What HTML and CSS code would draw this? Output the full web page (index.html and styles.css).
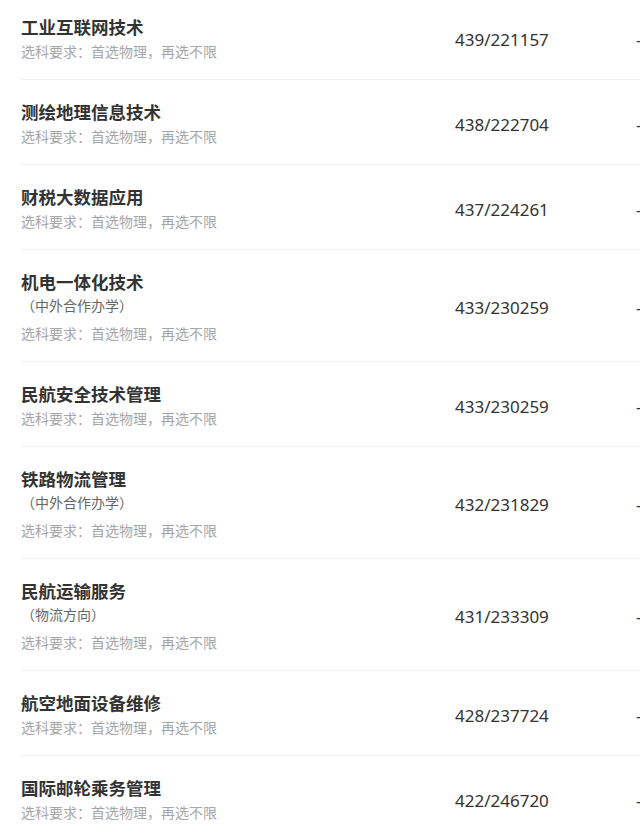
FILE: index.html
```html
<!DOCTYPE html>
<html lang="zh-CN">

<head>
    <meta charset="UTF-8">
    <meta name="viewport" content="width=device-width, initial-scale=1.0">
    <title>专业录取分数</title>
    <link rel="stylesheet" href="styles.css">
</head>

<body>
    <div class="list">
        <div class="row">
            <div class="major">
                <div class="name">工业互联网技术</div>
                <div class="req">选科要求：首选物理，再选不限</div>
            </div>
            <div class="score">439/221157</div>
            <div class="extra">-</div>
        </div>
        <div class="row">
            <div class="major">
                <div class="name">测绘地理信息技术</div>
                <div class="req">选科要求：首选物理，再选不限</div>
            </div>
            <div class="score">438/222704</div>
            <div class="extra">-</div>
        </div>
        <div class="row">
            <div class="major">
                <div class="name">财税大数据应用</div>
                <div class="req">选科要求：首选物理，再选不限</div>
            </div>
            <div class="score">437/224261</div>
            <div class="extra">-</div>
        </div>
        <div class="row">
            <div class="major">
                <div class="name">机电一体化技术</div>
                <div class="note">（中外合作办学）</div>
                <div class="req">选科要求：首选物理，再选不限</div>
            </div>
            <div class="score">433/230259</div>
            <div class="extra">-</div>
        </div>
        <div class="row">
            <div class="major">
                <div class="name">民航安全技术管理</div>
                <div class="req">选科要求：首选物理，再选不限</div>
            </div>
            <div class="score">433/230259</div>
            <div class="extra">-</div>
        </div>
        <div class="row">
            <div class="major">
                <div class="name">铁路物流管理</div>
                <div class="note">（中外合作办学）</div>
                <div class="req">选科要求：首选物理，再选不限</div>
            </div>
            <div class="score">432/231829</div>
            <div class="extra">-</div>
        </div>
        <div class="row">
            <div class="major">
                <div class="name">民航运输服务</div>
                <div class="note">（物流方向）</div>
                <div class="req">选科要求：首选物理，再选不限</div>
            </div>
            <div class="score">431/233309</div>
            <div class="extra">-</div>
        </div>
        <div class="row">
            <div class="major">
                <div class="name">航空地面设备维修</div>
                <div class="req">选科要求：首选物理，再选不限</div>
            </div>
            <div class="score">428/237724</div>
            <div class="extra">-</div>
        </div>
        <div class="row">
            <div class="major">
                <div class="name">国际邮轮乘务管理</div>
                <div class="req">选科要求：首选物理，再选不限</div>
            </div>
            <div class="score">422/246720</div>
            <div class="extra">-</div>
        </div>
    </div>
</body>

</html>
```

FILE: styles.css
```css
body {
    margin: 0;
    padding: 0;
    background-color: #fff;
    font-family: "Noto Sans CJK SC", "Noto Sans", sans-serif;
    color: #333;
    overflow: hidden;
}

.list {
    margin-top: -5px;
    margin-left: 21px;
}

.row {
    display: grid;
    grid-template-columns: 434px 181px 1fr;
    align-items: center;
    padding: 20px 0 16px;
    border-bottom: 1px solid #f2f2f2;
}

.name {
    font-size: 17.5px;
    font-weight: bold;
    line-height: 24px;
    color: #333;
}

.note {
    font-size: 14px;
    line-height: 22px;
    color: #666;
    margin-bottom: 5px;
}

.req {
    font-size: 14px;
    line-height: 24px;
    color: #a6a6a6;
}

.score {
    font-family: "Noto Sans", sans-serif;
    font-size: 17px;
    color: #333;
}

.extra {
    font-family: "Noto Sans", sans-serif;
    font-size: 17px;
    color: #333;
    overflow: hidden;
    white-space: nowrap;
}
```
